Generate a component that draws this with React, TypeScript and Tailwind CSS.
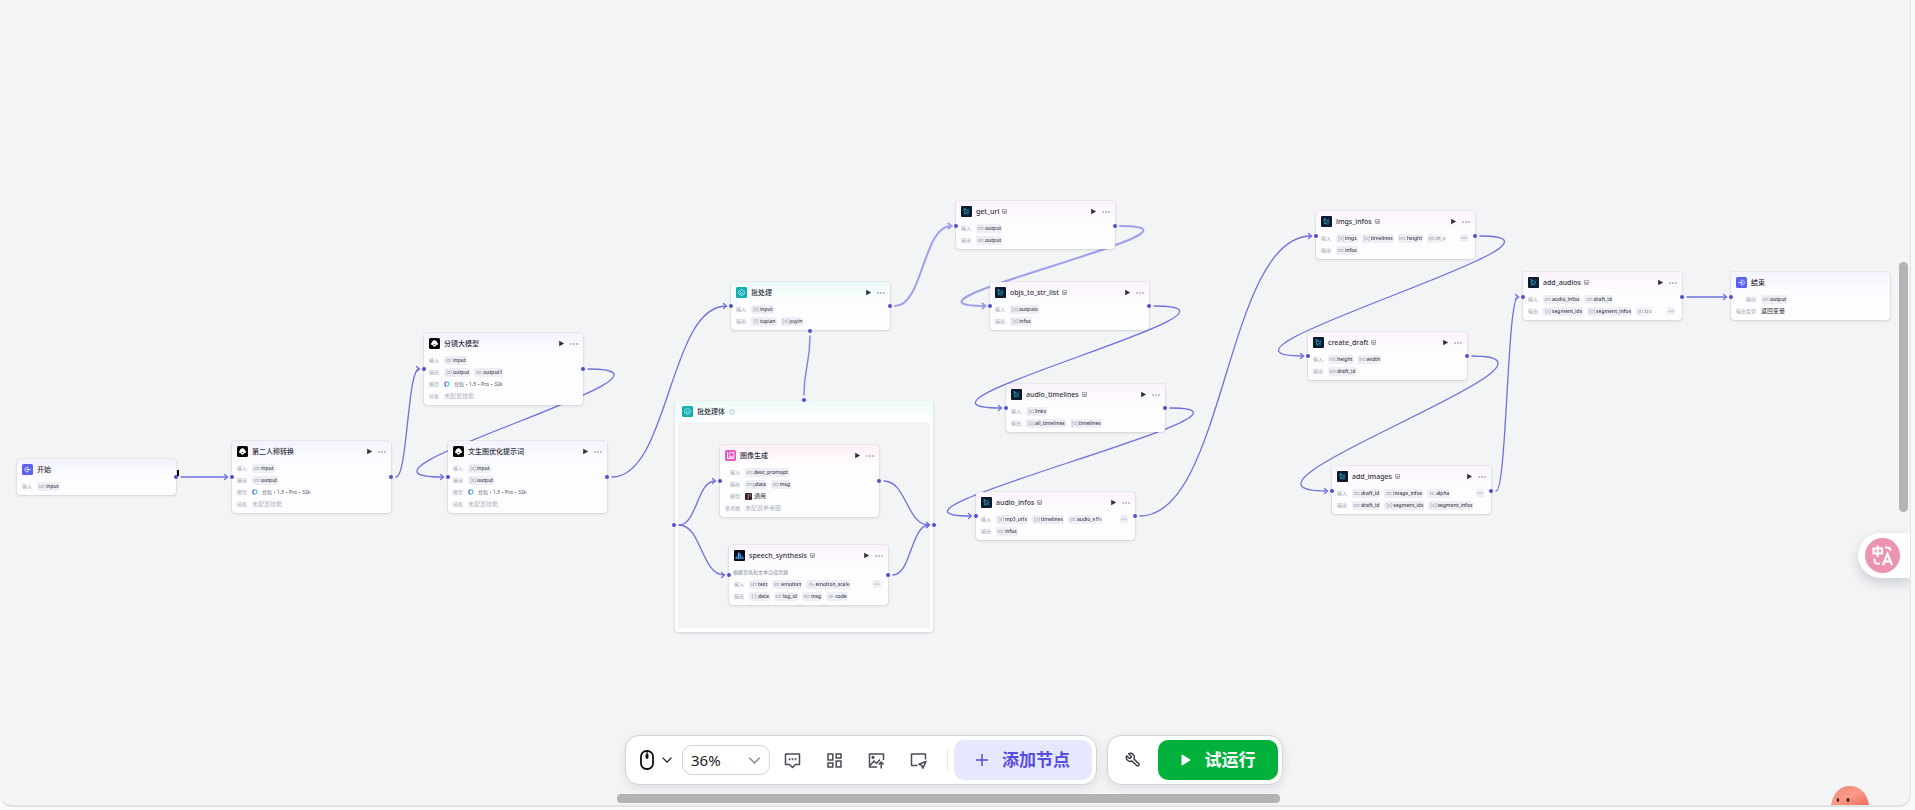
import { useState, type ReactNode } from 'react';

type Kind = 'start' | 'end' | 'llm' | 'batch' | 'image' | 'speech' | 'plugin';

type Tag = [type: string, name: string];

type Row = {
    label: string;
    tags?: Tag[];
    more?: boolean;
    model?: string;
    text?: string;
    muted?: string;
    thumb?: boolean;
};

type FlowNode = {
    id: string;
    kind: Kind;
    title: string;
    x: number;
    y: number;
    desc?: string;
    labelWidth?: string;
    rows: Row[];
    ports: { left?: number; right?: number; bottom?: boolean };
};

type Edge = {
    from: [number, number];
    to: [number, number];
    soft?: boolean;
};

const NODE_WIDTH = 159;

const MODEL_ROWS: Row[] = [
    { label: '模型', model: '豆包・1.5・Pro・32k' },
    { label: '技能', muted: '未配置技能' },
];

const NODES: FlowNode[] = [
    {
        id: 'start',
        kind: 'start',
        title: '开始',
        x: 17,
        y: 459,
        rows: [{ label: '输入', tags: [['str.', 'input']] }],
        ports: { right: 18 },
    },
    {
        id: 'second-person',
        kind: 'llm',
        title: '第二人称转换',
        x: 232,
        y: 441,
        rows: [
            { label: '输入', tags: [['str.', 'input']] },
            { label: '输出', tags: [['str.', 'output']] },
            ...MODEL_ROWS,
        ],
        ports: { left: 36, right: 36 },
    },
    {
        id: 'storyboard',
        kind: 'llm',
        title: '分镜大模型',
        x: 424,
        y: 333,
        rows: [
            { label: '输入', tags: [['str.', 'input']] },
            { label: '输出', tags: [['[s]', 'output'], ['str.', 'output1']] },
            ...MODEL_ROWS,
        ],
        ports: { left: 36, right: 36 },
    },
    {
        id: 'prompt-optimize',
        kind: 'llm',
        title: '文生图优化提示词',
        x: 448,
        y: 441,
        rows: [
            { label: '输入', tags: [['[s]', 'input']] },
            { label: '输出', tags: [['[s]', 'output']] },
            ...MODEL_ROWS,
        ],
        ports: { left: 36, right: 36 },
    },
    {
        id: 'batch',
        kind: 'batch',
        title: '批处理',
        x: 731,
        y: 282,
        rows: [
            { label: '输入', tags: [['[s]', 'input']] },
            { label: '输出', tags: [['[i]', 'tupian'], ['[o]', 'yuyin']] },
        ],
        ports: { left: 24, right: 24, bottom: true },
    },
    {
        id: 'image',
        kind: 'image',
        title: '图像生成',
        x: 720,
        y: 445,
        labelWidth: 'w-[15px]',
        rows: [
            { label: '输入', tags: [['str.', 'desc_promopt']] },
            { label: '输出', tags: [['img', 'data'], ['str.', 'msg']] },
            { label: '模型', text: '通用', thumb: true },
            { label: '参考图', muted: '未配置参考图' },
        ],
        ports: { left: 36, right: 36 },
    },
    {
        id: 'speech',
        kind: 'speech',
        title: 'speech_synthesis',
        x: 729,
        y: 545,
        desc: '根据音色和文本合成音频',
        rows: [
            {
                label: '输入',
                tags: [['str.', 'text'], ['str.', 'emotion'], ['№', 'emotion_scale']],
                more: true,
            },
            {
                label: '输出',
                tags: [['{ }', 'data'], ['str.', 'log_id'], ['str.', 'msg'], ['№', 'code']],
            },
        ],
        ports: { left: 30, right: 30 },
    },
    {
        id: 'get-url',
        kind: 'plugin',
        title: 'get_url',
        x: 956,
        y: 201,
        rows: [
            { label: '输入', tags: [['str.', 'output']] },
            { label: '输出', tags: [['str.', 'output']] },
        ],
        ports: { left: 25, right: 25 },
    },
    {
        id: 'objs-to-str-list',
        kind: 'plugin',
        title: 'objs_to_str_list',
        x: 990,
        y: 282,
        rows: [
            { label: '输入', tags: [['[o]', 'outputs']] },
            { label: '输出', tags: [['[s]', 'infos']] },
        ],
        ports: { left: 24, right: 24 },
    },
    {
        id: 'audio-timelines',
        kind: 'plugin',
        title: 'audio_timelines',
        x: 1006,
        y: 384,
        rows: [
            { label: '输入', tags: [['[s]', 'links']] },
            { label: '输出', tags: [['[o]', 'all_timelines'], ['[o]', 'timelines']] },
        ],
        ports: { left: 24, right: 24 },
    },
    {
        id: 'audio-infos',
        kind: 'plugin',
        title: 'audio_infos',
        x: 976,
        y: 492,
        rows: [
            {
                label: '输入',
                tags: [['[s]', 'mp3_urls'], ['[o]', 'timelines'], ['str.', 'audio_effe']],
                more: true,
            },
            { label: '输出', tags: [['str.', 'infos']] },
        ],
        ports: { left: 24, right: 24 },
    },
    {
        id: 'imgs-infos',
        kind: 'plugin',
        title: 'imgs_infos',
        x: 1316,
        y: 211,
        rows: [
            {
                label: '输入',
                tags: [['[s]', 'imgs'], ['[o]', 'timelines'], ['int.', 'height'], ['str.', 'in_a']],
                more: true,
            },
            { label: '输出', tags: [['str.', 'infos']] },
        ],
        ports: { left: 25, right: 25 },
    },
    {
        id: 'create-draft',
        kind: 'plugin',
        title: 'create_draft',
        x: 1308,
        y: 332,
        rows: [
            { label: '输入', tags: [['int.', 'height'], ['int.', 'width']] },
            { label: '输出', tags: [['str.', 'draft_id']] },
        ],
        ports: { left: 24, right: 24 },
    },
    {
        id: 'add-images',
        kind: 'plugin',
        title: 'add_images',
        x: 1332,
        y: 466,
        rows: [
            {
                label: '输入',
                tags: [['str.', 'draft_id'], ['str.', 'image_infos'], ['№', 'alpha']],
                more: true,
            },
            { label: '输出', tags: [['str.', 'draft_id'], ['[s]', 'segment_ids'], ['[o]', 'segment_infos']] },
        ],
        ports: { left: 25, right: 25 },
    },
    {
        id: 'add-audios',
        kind: 'plugin',
        title: 'add_audios',
        x: 1523,
        y: 272,
        rows: [
            { label: '输入', tags: [['str.', 'audio_infos'], ['str.', 'draft_id']] },
            {
                label: '输出',
                tags: [['[s]', 'segment_ids'], ['[o]', 'segment_infos'], ['str.', 'tra']],
                more: true,
            },
        ],
        ports: { left: 25, right: 25 },
    },
    {
        id: 'end',
        kind: 'end',
        title: '结束',
        x: 1731,
        y: 272,
        labelWidth: 'w-[20px]',
        rows: [
            { label: '输出', tags: [['str.', 'output']] },
            { label: '输出类型', text: '返回变量' },
        ],
        ports: { left: 25 },
    },
];

const EDGES: Edge[] = [
    { from: [176, 477], to: [232, 477] },
    { from: [391, 477], to: [424, 369] },
    { from: [583, 369], to: [448, 477] },
    { from: [607, 477], to: [731, 306] },
    { from: [890, 306], to: [956, 226], soft: true },
    { from: [1115, 226], to: [990, 306], soft: true },
    { from: [1149, 306], to: [1006, 408] },
    { from: [1165, 408], to: [976, 516] },
    { from: [1135, 516], to: [1316, 236] },
    { from: [1475, 236], to: [1308, 356] },
    { from: [1467, 356], to: [1332, 491] },
    { from: [1491, 491], to: [1523, 297] },
    { from: [1682, 297], to: [1731, 297] },
    { from: [674, 525], to: [720, 481] },
    { from: [674, 525], to: [729, 575] },
    { from: [879, 481], to: [934, 525] },
    { from: [888, 575], to: [934, 525] },
];

const HEADER_TINT: Record<Kind, string> = {
    start: 'from-[#f3f3fe]',
    end: 'from-[#f3f3fe]',
    llm: 'from-[#f3f3fe]',
    batch: 'from-[#ecfaf9]',
    image: 'from-[#fff0f8]',
    speech: 'from-[#fcf3fc]',
    plugin: 'from-[#fcf3fc]',
};

function edgePath({ from, to }: Edge) {
    const sx = from[0] + 5;
    const tx = to[0] - 5;
    // links that run backwards swing out past both nodes
    const bend = tx > sx ? (tx - sx) / 2 : Math.min(130, 38 + to[1] - from[1]);
    return `M${sx} ${from[1]}C${sx + bend} ${from[1]} ${tx - bend} ${to[1]} ${tx} ${to[1]}`;
}

export default function App() {
    return (
        <main className="h-screen overflow-hidden bg-[#f9fafa] pr-1 pb-[3px] font-['Noto_Sans','Noto_Sans_CJK_SC',sans-serif] text-[#30323c]">
            <section className="relative h-full overflow-hidden rounded-b-xl border-r border-b-2 border-[#e1e2e4] bg-[#f2f4f5]">
                <BatchBody />
                <Edges />
                {NODES.map((node) => (
                    <NodeCard key={node.id} node={node} />
                ))}
                <Port x={804} y={400} />
                <Port x={674} y={525} />
                <Port x={934} y={525} />
                <span className="absolute top-[470px] left-[177px] h-[6px] w-[2px] bg-black" aria-hidden />

                <div className="absolute right-[2px] top-[262px] h-[250px] w-[9px] rounded-full bg-[#b1b3b4]" aria-hidden />
                <div className="absolute inset-x-0 bottom-[2px] flex justify-center" aria-hidden>
                    <div className="mr-[14px] h-[9px] w-[663px] rounded bg-[#b1b3b4]" />
                </div>

                <Toolbar />
                <TranslateBadge />
                <Mascot />
            </section>
        </main>
    );
}

function BatchBody() {
    return (
        <div className="absolute top-[401px] left-[675px] flex h-[231px] w-[258px] flex-col rounded-[4px] bg-white shadow-[0_1px_3px_rgba(30,35,60,0.16)]">
            <header className="flex h-[21px] items-center gap-[4px] rounded-t-[4px] bg-linear-to-b from-[#ecfaf9] to-white px-[7px]">
                <KindIcon kind="batch" />
                <h2 className="text-[7px] leading-[10px] font-medium">批处理体</h2>
                <svg className="size-[6px]" viewBox="0 0 12 12" fill="none" stroke="#9a9eaa" aria-hidden>
                    <circle cx="6" cy="6" r="5" />
                    <path d="M6 5.2v3.4M6 3v1" />
                </svg>
            </header>
            <div className="mx-[3px] mb-[4px] flex-1 bg-[#f2f4f5]" />
        </div>
    );
}

function Edges() {
    return (
        <svg className="absolute inset-0 h-full w-full" fill="none" strokeLinecap="round" aria-hidden>
            {EDGES.map((edge) => {
                const [x, y] = edge.to;
                return (
                    <g
                        key={`${edge.from.join()}-${edge.to.join()}`}
                        stroke={edge.soft ? '#a09fec' : '#6f70dc'}
                        strokeWidth={edge.soft ? 2 : 1.3}
                    >
                        <path d={edgePath(edge)} />
                        <path d={`M${x - 7.5} ${y - 2.5}L${x - 4.5} ${y}L${x - 7.5} ${y + 2.5}`} />
                    </g>
                );
            })}
            <path d="M810 336C810 366 804 366 804 395" stroke="#8685e2" strokeWidth="1.5" />
        </svg>
    );
}

function Port({ x, y }: { x: number; y: number }) {
    return (
        <span
            className="absolute size-[4px] -translate-1/2 rounded-full bg-[#504fd2]"
            style={{ left: x, top: y }}
            aria-hidden
        />
    );
}

function NodeCard({ node }: { node: FlowNode }) {
    const { kind, title, ports, desc } = node;
    const runnable = kind !== 'start' && kind !== 'end';
    const fromStore = kind === 'plugin' || kind === 'speech';

    return (
        <article
            className="absolute w-[159px] rounded-[3px] bg-[#fdfdff] pb-[3px] shadow-[0_0_1px_rgba(30,35,60,0.35),0_1px_3px_rgba(30,35,60,0.12)]"
            style={{ left: node.x, top: node.y }}
        >
            <header
                className={`flex h-[21px] items-center rounded-t-[3px] bg-linear-to-b to-[#fdfdff] px-[5px] ${HEADER_TINT[kind]}`}
            >
                <KindIcon kind={kind} />
                <h2 className="ml-[4px] text-[7px] leading-[10px] font-medium whitespace-nowrap">{title}</h2>
                {fromStore ? <StoreMark /> : null}
                {runnable ? (
                    <div className="ml-auto flex items-center gap-[5px]">
                        <button type="button" aria-label="运行" className="block">
                            <svg className="size-[7px]" viewBox="0 0 12 12" aria-hidden>
                                <path d="M2 1.300 10.500 6 2 10.700z" fill="#2e303a" />
                            </svg>
                        </button>
                        <button type="button" aria-label="更多" className="block">
                            <svg className="h-[6px] w-[8px]" viewBox="0 0 16 12" fill="#5c5f6b" aria-hidden>
                                <circle cx="2" cy="6" r="1.3" />
                                <circle cx="8" cy="6" r="1.3" />
                                <circle cx="14" cy="6" r="1.3" />
                            </svg>
                        </button>
                    </div>
                ) : null}
            </header>
            {desc ? <p className="h-[12px] px-[4px] text-[5px] leading-[12px] text-[#868a96]">{desc}</p> : null}
            {node.rows.map((row) => (
                <NodeRow key={row.label} row={row} labelWidth={node.labelWidth ?? 'w-[10px]'} />
            ))}
            {ports.left ? <Port x={0} y={ports.left} /> : null}
            {ports.right ? <Port x={NODE_WIDTH} y={ports.right} /> : null}
            {ports.bottom ? <Port x={79} y={49} /> : null}
        </article>
    );
}

function NodeRow({ row, labelWidth }: { row: Row; labelWidth: string }) {
    return (
        <div className="flex h-[12px] items-center gap-[5px] pr-[7px] pl-[5px] text-[5px] leading-[8px] whitespace-nowrap">
            <span className={`shrink-0 text-right text-[#a3a6b3] ${labelWidth}`}>{row.label}</span>
            {row.tags ? (
                <div
                    className={`flex min-w-0 flex-1 gap-[4px] ${row.more ? 'overflow-hidden mask-r-from-80% mask-r-to-100%' : ''}`}
                >
                    {row.tags.map(([type, name]) => (
                        <span key={name} className="flex h-[9px] shrink-0 items-center rounded-[2px] bg-[#eeeff5] px-[1px]">
                            <span className="min-w-[8px] text-center text-[#a0a3b1]">{type}</span>
                            <span className="font-medium text-[#3f414c]">{name}</span>
                        </span>
                    ))}
                </div>
            ) : null}
            {row.more ? (
                <button type="button" aria-label="更多变量" className="h-[8px] w-[8px] rounded-[2px] bg-[#eeeff5]">
                    <svg className="size-[8px]" viewBox="0 0 16 16" fill="#7d808c" aria-hidden>
                        <circle cx="4" cy="8" r="1" />
                        <circle cx="8" cy="8" r="1" />
                        <circle cx="12" cy="8" r="1" />
                    </svg>
                </button>
            ) : null}
            {row.model ? (
                <span className="flex items-center gap-[4px] text-[#4a4c58]">
                    <svg className="size-[6px]" viewBox="0 0 12 12" fill="none" strokeWidth="2.2" aria-hidden>
                        <path d="M4 10.5C1.500 8 1.500 4 3.500 1.500" stroke="#5b3df5" />
                        <path d="M3.500 1.500C6 1 9.500 2.500 10 5" stroke="#3aa0f8" />
                        <path d="M10 5C10.500 8 8 10.500 4.500 10.500" stroke="#35d3c0" />
                    </svg>
                    {row.model}
                </span>
            ) : null}
            {row.thumb ? (
                <svg className="size-[7px]" viewBox="0 0 14 14" aria-hidden>
                    <rect width="14" height="14" rx="2" fill="#2c2628" />
                    <path d="M5 2h3v11H5z" fill="#a05a5c" />
                    <path d="M9 2h3v5H9z" fill="#6e6668" />
                </svg>
            ) : null}
            {row.text ? <span className={`text-[6px] ${row.thumb ? '-ml-[3px]' : ''}`}>{row.text}</span> : null}
            {row.muted ? <span className="text-[6px] text-[#b2b5bf]">{row.muted}</span> : null}
        </div>
    );
}

function StoreMark() {
    return (
        <svg className="ml-[3px] size-[5px]" viewBox="0 0 10 10" fill="none" stroke="#6d707c" strokeWidth="1.2" aria-hidden>
            <path d="M1 1h8v4H1zM1.500 5v4h7V5M3.500 7h3" />
        </svg>
    );
}

const ICONS: Record<Kind, ReactNode> = {
    start: (
        <>
            <rect width="22" height="22" rx="3" fill="#5c62f0" />
            <path d="M13.500 7A5 5 0 1 0 13.500 15" stroke="#d9dbff" strokeWidth="1.800" />
            <path d="M18 11H9.500M12 8.500 9.500 11l2.500 2.500" stroke="#fff" strokeWidth="1.600" />
        </>
    ),
    end: (
        <>
            <rect width="22" height="22" rx="3" fill="#5c62f0" />
            <path d="M9 7a5 5 0 1 1 0 8" stroke="#d9dbff" strokeWidth="1.800" />
            <path d="M4.500 11h8M10.500 8.500 13 11l-2.500 2.500" stroke="#fff" strokeWidth="1.600" />
        </>
    ),
    llm: (
        <>
            <rect width="22" height="22" rx="3" fill="#050505" />
            <path
                d="M11 4.500c3 0 5 2 5 4.700 1.600.6 2.300 2.300 1.600 3.600-.6 1-1.700 1.200-2.700 1-.5 1.700-1.700 3.200-3.900 3.200s-3.400-1.500-3.900-3.200c-1 .2-2.100 0-2.700-1-.7-1.300 0-3 1.600-3.600 0-2.700 2-4.700 5-4.700z"
                fill="#fff"
            />
            <path d="M8.300 12.500c1.500 2.200 4 2.200 5.400 0z" fill="#050505" />
        </>
    ),
    batch: (
        <>
            <rect width="22" height="22" rx="3" fill="#12aeb0" />
            <path d="M11 4.500 16.500 7.500v6.500L11 17.500 5.500 14V7.500zM8.200 9.500 11 11.200l2.800-1.700M8.200 12.500l2.800 1.700 2.800-1.700" stroke="#b9f4ee" strokeWidth="1.400" />
        </>
    ),
    image: (
        <>
            <rect width="22" height="22" rx="3" fill="#e85cc0" />
            <path d="M5 4.500v12.500h12.500V5H9" stroke="#fff" strokeWidth="1.700" />
            <path d="m7 15 3.500-4.500 2.500 2.500 1.500-1.500L16 15z" fill="#fff" />
            <circle cx="8.500" cy="8" r="1.300" fill="#fff" />
        </>
    ),
    speech: (
        <>
            <rect width="22" height="22" rx="2" fill="#0a0d14" />
            <path d="M3 18v-4l3-2v6zM7 18V8l3-5v15zM11 18V4l3 4v10zM15 18v-7l4 3v4z" fill="#2f86d8" />
            <path d="M9 18V8l1.500-3v13z" fill="#8cc8f5" />
        </>
    ),
    plugin: (
        <>
            <rect width="22" height="22" rx="2" fill="#0d1a2b" />
            <path d="M7.500 6v10l8.500-5z" stroke="#2fb4d8" strokeWidth="1.600" />
            <path d="M4 5h5M3.500 9.500h3M11 17l6-2M14 5l3 2.500" stroke="#2377a8" strokeWidth="1.500" />
        </>
    ),
};

function KindIcon({ kind }: { kind: Kind }) {
    return (
        <svg className="size-[11px] shrink-0" viewBox="0 0 22 22" fill="none" aria-hidden>
            {ICONS[kind]}
        </svg>
    );
}

function Toolbar() {
    const [zoom, setZoom] = useState('36%');

    return (
        <div className="absolute inset-x-0 bottom-[20px] flex justify-center gap-[10px] pr-0.5">
            <div className="flex items-center rounded-[14px] border border-[#d2d3da] bg-white p-1 shadow-[0_3px_10px_rgba(30,35,60,0.1)]">
                <button type="button" aria-label="鼠标模式" className="flex h-10 items-center gap-2 px-2.5">
                    <svg className="h-5 w-3.5" viewBox="0 0 14 20" fill="none" stroke="#111" strokeWidth="1.8" aria-hidden>
                        <rect x="1" y="1" width="12" height="18" rx="5.500" />
                        <path d="M7 1v3" strokeWidth="1.2" />
                        <rect x="6" y="4" width="2" height="4.500" rx="1" fill="#111" strokeWidth="1" />
                    </svg>
                    <Chevron className="h-1.5 w-2.5" color="#111" />
                </button>
                <div className="relative">
                    <select
                        aria-label="缩放"
                        value={zoom}
                        onChange={(e) => setZoom(e.target.value)}
                        className="block h-[30px] w-[88px] appearance-none rounded-[10px] border border-[#d2d3da] bg-white pl-2 text-[15px] leading-5 text-[#1c1d24]"
                    >
                        <option>36%</option>
                        <option>50%</option>
                        <option>100%</option>
                    </select>
                    <Chevron className="pointer-events-none absolute top-3 right-[9px] h-[7px] w-[13px]" color="#8b8d96" />
                </div>
                <div className="ml-px flex">
                    <ToolButton label="添加注释">
                        <path d="M1.500 2h14v10.500h-4L8.500 15.500l-3-3h-4z" strokeLinejoin="round" />
                        <path d="M4.700 7.200h1.600M7.700 7.200h1.600M10.700 7.200h1.600" strokeWidth="2" />
                    </ToolButton>
                    <ToolButton label="优化布局">
                        <path d="M2 2h4.800v6H2zM2 11h4.800v4H2zM10.200 2H15v4h-4.800zM10.200 9H15v6h-4.800z" />
                    </ToolButton>
                    <ToolButton label="导出图片">
                        <path d="M9 15H1.500V2h14v6" strokeLinejoin="round" />
                        <path d="M2 13.500 6 9l2.500 2.500L12 7.500M13.200 16.500v-6M10.800 12.500l2.400-2.500 2.400 2.500" />
                        <circle cx="5" cy="5.300" r=".9" fill="currentColor" />
                    </ToolButton>
                    <ToolButton label="缩略图">
                        <path d="M7.500 13.500h-6V2h14v5.500" strokeLinejoin="round" />
                        <path d="m16 9.500-7 2.700 2.600 1.200 1.200 2.800z" strokeLinejoin="round" />
                    </ToolButton>
                </div>
                <span className="mr-1.5 ml-2 h-5 w-px bg-[#e6e7eb]" aria-hidden />
                <button
                    type="button"
                    className="flex h-10 w-[138px] items-center justify-center gap-[14px] rounded-[10px] bg-[#e5e8fe] text-[17px] leading-6 font-bold text-[#5a4be2]"
                >
                    <svg className="size-3" viewBox="0 0 12 12" stroke="currentColor" strokeWidth="1.500" aria-hidden>
                        <path d="M6 0v12M0 6h12" />
                    </svg>
                    添加节点
                </button>
            </div>
            <div className="flex items-center rounded-[14px] border border-[#d2d3da] bg-white p-1 shadow-[0_3px_10px_rgba(30,35,60,0.1)]">
                <button type="button" aria-label="调试" className="flex h-10 w-[46px] items-center justify-center pr-1">
                    <svg
                        className="size-4 -scale-x-100 text-[#3c3d49]"
                        viewBox="0 0 24 24"
                        fill="none"
                        stroke="currentColor"
                        strokeWidth="2.200"
                        strokeLinejoin="round"
                        aria-hidden
                    >
                        <path d="M14.700 6.300a1 1 0 0 0 0 1.400l1.600 1.600a1 1 0 0 0 1.400 0l3.770-3.770a6 6 0 0 1-7.940 7.940l-6.910 6.910a2.120 2.120 0 0 1-3-3l6.910-6.910a6 6 0 0 1 7.940-7.940l-3.760 3.760z" />
                    </svg>
                </button>
                <button
                    type="button"
                    className="flex h-10 w-[120px] items-center justify-center gap-[14px] rounded-[10px] bg-[#00b23c] text-[17px] leading-6 font-bold text-white"
                >
                    <svg className="h-3 w-2.5" viewBox="0 0 10 12" aria-hidden>
                        <path d="M.5 1.300C.5.700 1 .500 1.500.800l7.700 4.700c.4.300.4.800 0 1L1.500 11.200c-.5.300-1 .1-1-.5z" fill="#fff" />
                    </svg>
                    试运行
                </button>
            </div>
        </div>
    );
}

function ToolButton({ label, children }: { label: string; children: ReactNode }) {
    return (
        <button type="button" aria-label={label} className="flex h-10 w-[42px] items-center justify-center text-[#4a4a58]">
            <svg className="size-[17px]" viewBox="0 0 17 17" fill="none" stroke="currentColor" strokeWidth="1.500" aria-hidden>
                {children}
            </svg>
        </button>
    );
}

function Chevron({ className, color }: { className: string; color: string }) {
    return (
        <svg className={className} viewBox="0 0 12 7" fill="none" stroke={color} strokeWidth="1.500" aria-hidden>
            <path d="m.7.700 5.300 5.300L11.300.700" />
        </svg>
    );
}

function TranslateBadge() {
    return (
        <button
            type="button"
            aria-label="翻译"
            className="absolute top-[533px] right-0 flex h-[45px] w-[52px] items-center rounded-l-full bg-white pl-[7px] shadow-[0_5px_12px_rgba(30,35,60,0.18)]"
        >
            <svg className="size-[35px]" viewBox="0 0 35 35" fill="none" stroke="#fff" strokeWidth="2.200" aria-hidden>
                <circle cx="17.500" cy="17.500" r="17.500" fill="#ec94ae" stroke="none" />
                <path d="M8.500 10.500h8.500v5H8.500zM12.750 7.500v11.500" />
                <path d="M18 27l4.500-11L27 27M19.500 23.500h6" />
                <path d="M20 9.500h2.500c2 0 3 1 3 3.500M9.500 20.500v2c0 2 1 3.200 3 3.200h2.500" strokeWidth="1.800" />
            </svg>
        </button>
    );
}

function Mascot() {
    return (
        <svg className="absolute right-[41px] bottom-0 h-[19px] w-[38px]" viewBox="0 0 38 19" aria-hidden>
            <defs>
                <linearGradient id="mascot" x1="0" y1="0" x2="1" y2="1">
                    <stop offset="0" stopColor="#f08678" />
                    <stop offset=".5" stopColor="#fb9a88" />
                    <stop offset="1" stopColor="#f06a5e" />
                </linearGradient>
            </defs>
            <path d="M0 19C2 7 9 0 19 0s17 7 19 19z" fill="url(#mascot)" />
            <ellipse cx="7" cy="14" rx="1.200" ry="2" fill="#3a2020" />
            <ellipse cx="17" cy="14" rx="1.500" ry="2" fill="#3a2020" />
        </svg>
    );
}
